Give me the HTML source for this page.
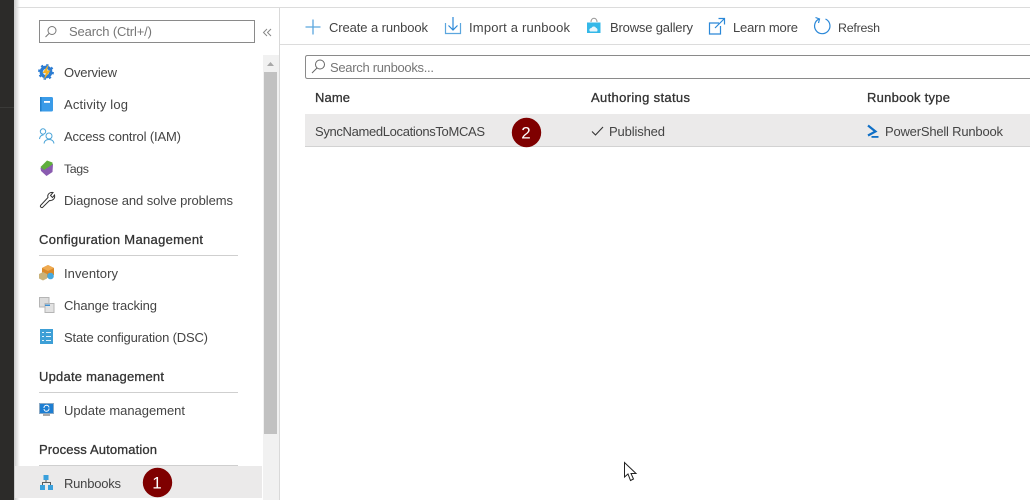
<!DOCTYPE html>
<html><head><meta charset="utf-8"><title>Runbooks</title>
<style>
html,body{margin:0;padding:0;width:1030px;height:500px;overflow:hidden;background:#fff}
svg{display:block}
text{font-family:"Liberation Sans",sans-serif;font-size:13px;fill:#444}
.b{fill:#333;stroke:#333;stroke-width:.3px;font-size:13px}
.g{fill:#767676}
.s{font-size:12.4px}
</style></head><body>
<svg width="1030" height="500" viewBox="0 0 1030 500" xmlns="http://www.w3.org/2000/svg">
<defs><linearGradient id="sh" x1="0" x2="1" y1="0" y2="0"><stop offset="0" stop-color="#c9c9c9"/><stop offset="1" stop-color="#fff"/></linearGradient></defs>
<rect width="1030" height="500" fill="#fff"/>
<!-- left dark strip -->
<rect x="0" y="0" width="14" height="500" fill="#2c2b29"/>
<rect x="0" y="107" width="14" height="1" fill="#3a3a38"/>
<rect x="14" y="0" width="6" height="500" fill="url(#sh)"/>
<rect x="15" y="7" width="1015" height="1" fill="#dcdcdc"/>

<!-- sidebar search -->
<rect x="39.500" y="20.500" width="215" height="22" fill="#fff" stroke="#8a8a8a"/>
<circle cx="52" cy="30.500" r="4" fill="none" stroke="#777" stroke-width="1"/>
<path d="M49 33.500L45.500 37" stroke="#777" stroke-width="1" fill="none"/>
<text x="69" y="36" class="g" textLength="83" lengthAdjust="spacing">Search (Ctrl+/)</text>
<path d="M267 29L263.500 32.500L267 36M271 29L267.500 32.500L271 36" fill="none" stroke="#888" stroke-width="1"/>

<!-- sidebar scrollbar -->
<rect x="263" y="55" width="16" height="445" fill="#f1f1f1"/>
<path d="M267 66L270.500 62L274 66Z" fill="#a8a8a8"/>
<rect x="264" y="72" width="13" height="362" fill="#c1c1c1"/>
<rect x="279" y="8" width="1" height="492" fill="#d9d9d9"/>

<!-- menu items -->
<g>
<text x="64" y="77" textLength="53" lengthAdjust="spacing">Overview</text>
<text x="64" y="109" textLength="64" lengthAdjust="spacing">Activity log</text>
<text x="64" y="141" textLength="117" lengthAdjust="spacing">Access control (IAM)</text>
<text x="64" y="173" class="s" textLength="25" lengthAdjust="spacing">Tags</text>
<text x="64" y="205" textLength="169" lengthAdjust="spacing">Diagnose and solve problems</text>
<text x="39" y="244" class="b" textLength="164" lengthAdjust="spacing">Configuration Management</text>
<rect x="39" y="255" width="199" height="1" fill="#cfcfcf"/>
<text x="64" y="278" textLength="54" lengthAdjust="spacing">Inventory</text>
<text x="64" y="310" textLength="93" lengthAdjust="spacing">Change tracking</text>
<text x="64" y="342" textLength="144" lengthAdjust="spacing">State configuration (DSC)</text>
<text x="39" y="381" class="b" textLength="125" lengthAdjust="spacing">Update management</text>
<rect x="39" y="392" width="199" height="1" fill="#cfcfcf"/>
<text x="64" y="415" textLength="121" lengthAdjust="spacing">Update management</text>
<text x="39" y="454" class="b" textLength="118" lengthAdjust="spacing">Process Automation</text>
<rect x="39" y="465" width="199" height="1" fill="#cfcfcf"/>
<rect x="15" y="466" width="247" height="32" fill="#ebeaea"/>
<text x="64" y="488" textLength="57" lengthAdjust="spacing">Runbooks</text>
</g>

<!-- overview icon -->
<circle cx="46" cy="72" r="4.800" fill="#d8ecfa" stroke="#2b7cd3" stroke-width="3.200"/>
<circle cx="46" cy="72" r="7" fill="none" stroke="#2b7cd3" stroke-width="1.800" stroke-dasharray="2.400 3.100"/>
<path d="M48.500 64.500L42.500 73H45.800L44 79.500L50.500 70.500H47Z" fill="#f5b024"/>
<!-- activity log icon -->
<rect x="40" y="97" width="13" height="14.500" rx="1.500" fill="#3a9be8"/>
<rect x="44" y="101" width="6" height="1.800" fill="#fff"/>
<rect x="40" y="97" width="1.500" height="14.500" fill="#1f7fcc"/>
<!-- IAM icon -->
<circle cx="43" cy="131.500" r="2.700" fill="none" stroke="#4aa4d8" stroke-width="1"/>
<path d="M39.500 139C40 135.500 42 135 43.500 135" fill="none" stroke="#4aa4d8"/>
<circle cx="49" cy="136" r="3" fill="none" stroke="#4aa4d8" stroke-width="1"/>
<path d="M44 143.500C44.500 140 47 139.500 49 139.500C51 139.500 53.500 140 54 143.500" fill="none" stroke="#4aa4d8"/>
<!-- tags icon -->
<path d="M40.500 168L47 161L53 164L52.500 172L46.500 176L41 171Z" fill="#8a5bb0"/>
<path d="M40.500 167L47 160.500L52.500 162.500L52.500 164.500L44 170Z" fill="#5fae3d"/>
<!-- wrench -->
<path d="M40.500 205.500L48 197.500C47 194.500 49.500 192 53 192.500L50.500 195.500L52.500 197.500L54.500 195C55.500 198.500 52.500 201 49.500 200.500L42.500 207.500C41 208 40 206.500 40.500 205.500Z" fill="none" stroke="#333" stroke-width="1"/>
<!-- inventory -->
<path d="M42 268L48 265L54 268V275L48 278L42 275Z" fill="#d98a2b"/>
<path d="M42 268L48 265L54 268L48 271Z" fill="#efaa50"/>
<path d="M39 274L43 272L47 274V278.500L43 280.500L39 278.500Z" fill="#c9b27a"/>
<circle cx="50.500" cy="276" r="3.300" fill="#45a9e0"/>
<!-- change tracking -->
<rect x="39.500" y="297.500" width="9.500" height="9.500" fill="#dcdcdc" stroke="#b5b5b5"/>
<rect x="45" y="303.500" width="9" height="9" fill="#e2e2e2" stroke="#b5b5b5"/>
<rect x="45" y="304.500" width="5" height="1.500" fill="#3f8fd0"/>
<!-- state config -->
<rect x="40" y="329" width="13" height="15" fill="#3d9fd6"/>
<path d="M42 332.500H44M46 332.500H51M42 336.500H44M46 336.500H51M42 340.500H44M46 340.500H51" stroke="#dff1fb" stroke-width="1"/>
<!-- update -->
<rect x="39.500" y="403.500" width="14" height="10" fill="#1d7ed2" stroke="#8ba9c4"/>
<path d="M44 408A2.500 2.500 0 0 1 49 407.500M49 408.500A2.500 2.500 0 0 1 44 409" fill="none" stroke="#fff" stroke-width="1"/>
<rect x="43" y="414" width="7" height="2" fill="#a9a9a9"/>
<!-- runbooks -->
<rect x="43.500" y="475" width="5" height="5" fill="#3aa0dc"/>
<rect x="40" y="485" width="5" height="5" fill="#3aa0dc"/>
<rect x="48" y="485" width="5" height="5" fill="#3aa0dc"/>
<path d="M46 480V483M42.500 485V482.500H50.500V485" fill="none" stroke="#5a5a5a" stroke-width="1"/>

<circle cx="157.500" cy="482.500" r="14.700" fill="#7f0000"/>
<text x="157" y="488.500" text-anchor="middle" style="font-size:17px;fill:#fff">1</text>

<!-- toolbar -->
<rect x="280" y="44" width="750" height="1" fill="#dcdcdc"/>
<path d="M313 19.500V34.500M305.500 27H320.500" stroke="#5ba6de" stroke-width="1.300" fill="none"/>
<text x="329" y="32" textLength="99" lengthAdjust="spacing">Create a runbook</text>
<path d="M445.500 23V33.500H460.500V23" fill="none" stroke="#5ba6de" stroke-width="1.200"/>
<path d="M453 17V30M448.500 25.500L453 30L457.500 25.500" fill="none" stroke="#2b88d8" stroke-width="1.200"/>
<text x="469" y="32" textLength="101" lengthAdjust="spacing">Import a runbook</text>
<path d="M591 22C591 17 597 17 597 22" fill="none" stroke="#999"/>
<rect x="587" y="22.500" width="13.500" height="10.500" fill="#35b8e8"/>
<path d="M590 31.500C588.500 29.500 590 28 591.500 28C592 26 595.500 26 596 28C597.500 28 598 30.500 597 31.500Z" fill="#e8f6fc"/>
<text x="610" y="32" textLength="83" lengthAdjust="spacing">Browse gallery</text>
<path d="M719 23H709.500V34H720.500V26" fill="none" stroke="#2b88d8" stroke-width="1.200"/>
<path d="M715 28L724 19M718.500 18.500H724.500V24.500" fill="none" stroke="#2b88d8" stroke-width="1.200"/>
<text x="733" y="32" textLength="65" lengthAdjust="spacing">Learn more</text>
<path d="M819.500 18.800A7.700 7.700 0 1 0 825.500 19" fill="none" stroke="#2b88d8" stroke-width="1.200"/>
<path d="M815.500 17.500L819.500 19L818.500 23" fill="none" stroke="#2b88d8" stroke-width="1.200"/>
<text x="838" y="32" class="s" textLength="42" lengthAdjust="spacing">Refresh</text>

<!-- runbook search -->
<path d="M1031 55.500H307.500Q305.500 55.500 305.500 57.500V76.500Q305.500 78.500 307.500 78.500H1031" fill="#fff" stroke="#8a8a8a"/>
<circle cx="320" cy="64.500" r="4.500" fill="none" stroke="#666" stroke-width="1"/>
<path d="M317 68L312 73" stroke="#666" stroke-width="1"/>
<text x="330" y="72" class="g" textLength="104" lengthAdjust="spacing">Search runbooks...</text>

<!-- table -->
<text x="315" y="102" class="b" textLength="35" lengthAdjust="spacing">Name</text>
<text x="591" y="102" class="b" textLength="99" lengthAdjust="spacing">Authoring status</text>
<text x="867" y="102" class="b" textLength="83" lengthAdjust="spacing">Runbook type</text>
<rect x="305" y="114" width="725" height="32" fill="#ebeaea"/>
<rect x="305" y="146" width="725" height="1" fill="#d2d2d2"/>
<text x="315" y="136" textLength="170" lengthAdjust="spacing">SyncNamedLocationsToMCAS</text>
<circle cx="526.500" cy="132.500" r="14.700" fill="#7f0000"/>
<text x="526" y="138.500" text-anchor="middle" style="font-size:17px;fill:#fff">2</text>
<path d="M592 131.500L595.500 135L603 127" fill="none" stroke="#333" stroke-width="1.100"/>
<text x="609" y="136" textLength="56" lengthAdjust="spacing">Published</text>
<path d="M868 125.500L875.500 131.500L868 135.500" fill="none" stroke="#0f6fc6" stroke-width="2.200"/>
<rect x="871.500" y="136" width="7" height="1.800" fill="#0f6fc6"/>
<text x="885" y="136" textLength="118" lengthAdjust="spacing">PowerShell Runbook</text>

<!-- cursor -->
<path d="M624.500 462.500V477L628 474L630.500 480.500L633.500 479L631 473.500H636Z" fill="#fff" stroke="#222" stroke-width="1"/>
</svg>
</body></html>
